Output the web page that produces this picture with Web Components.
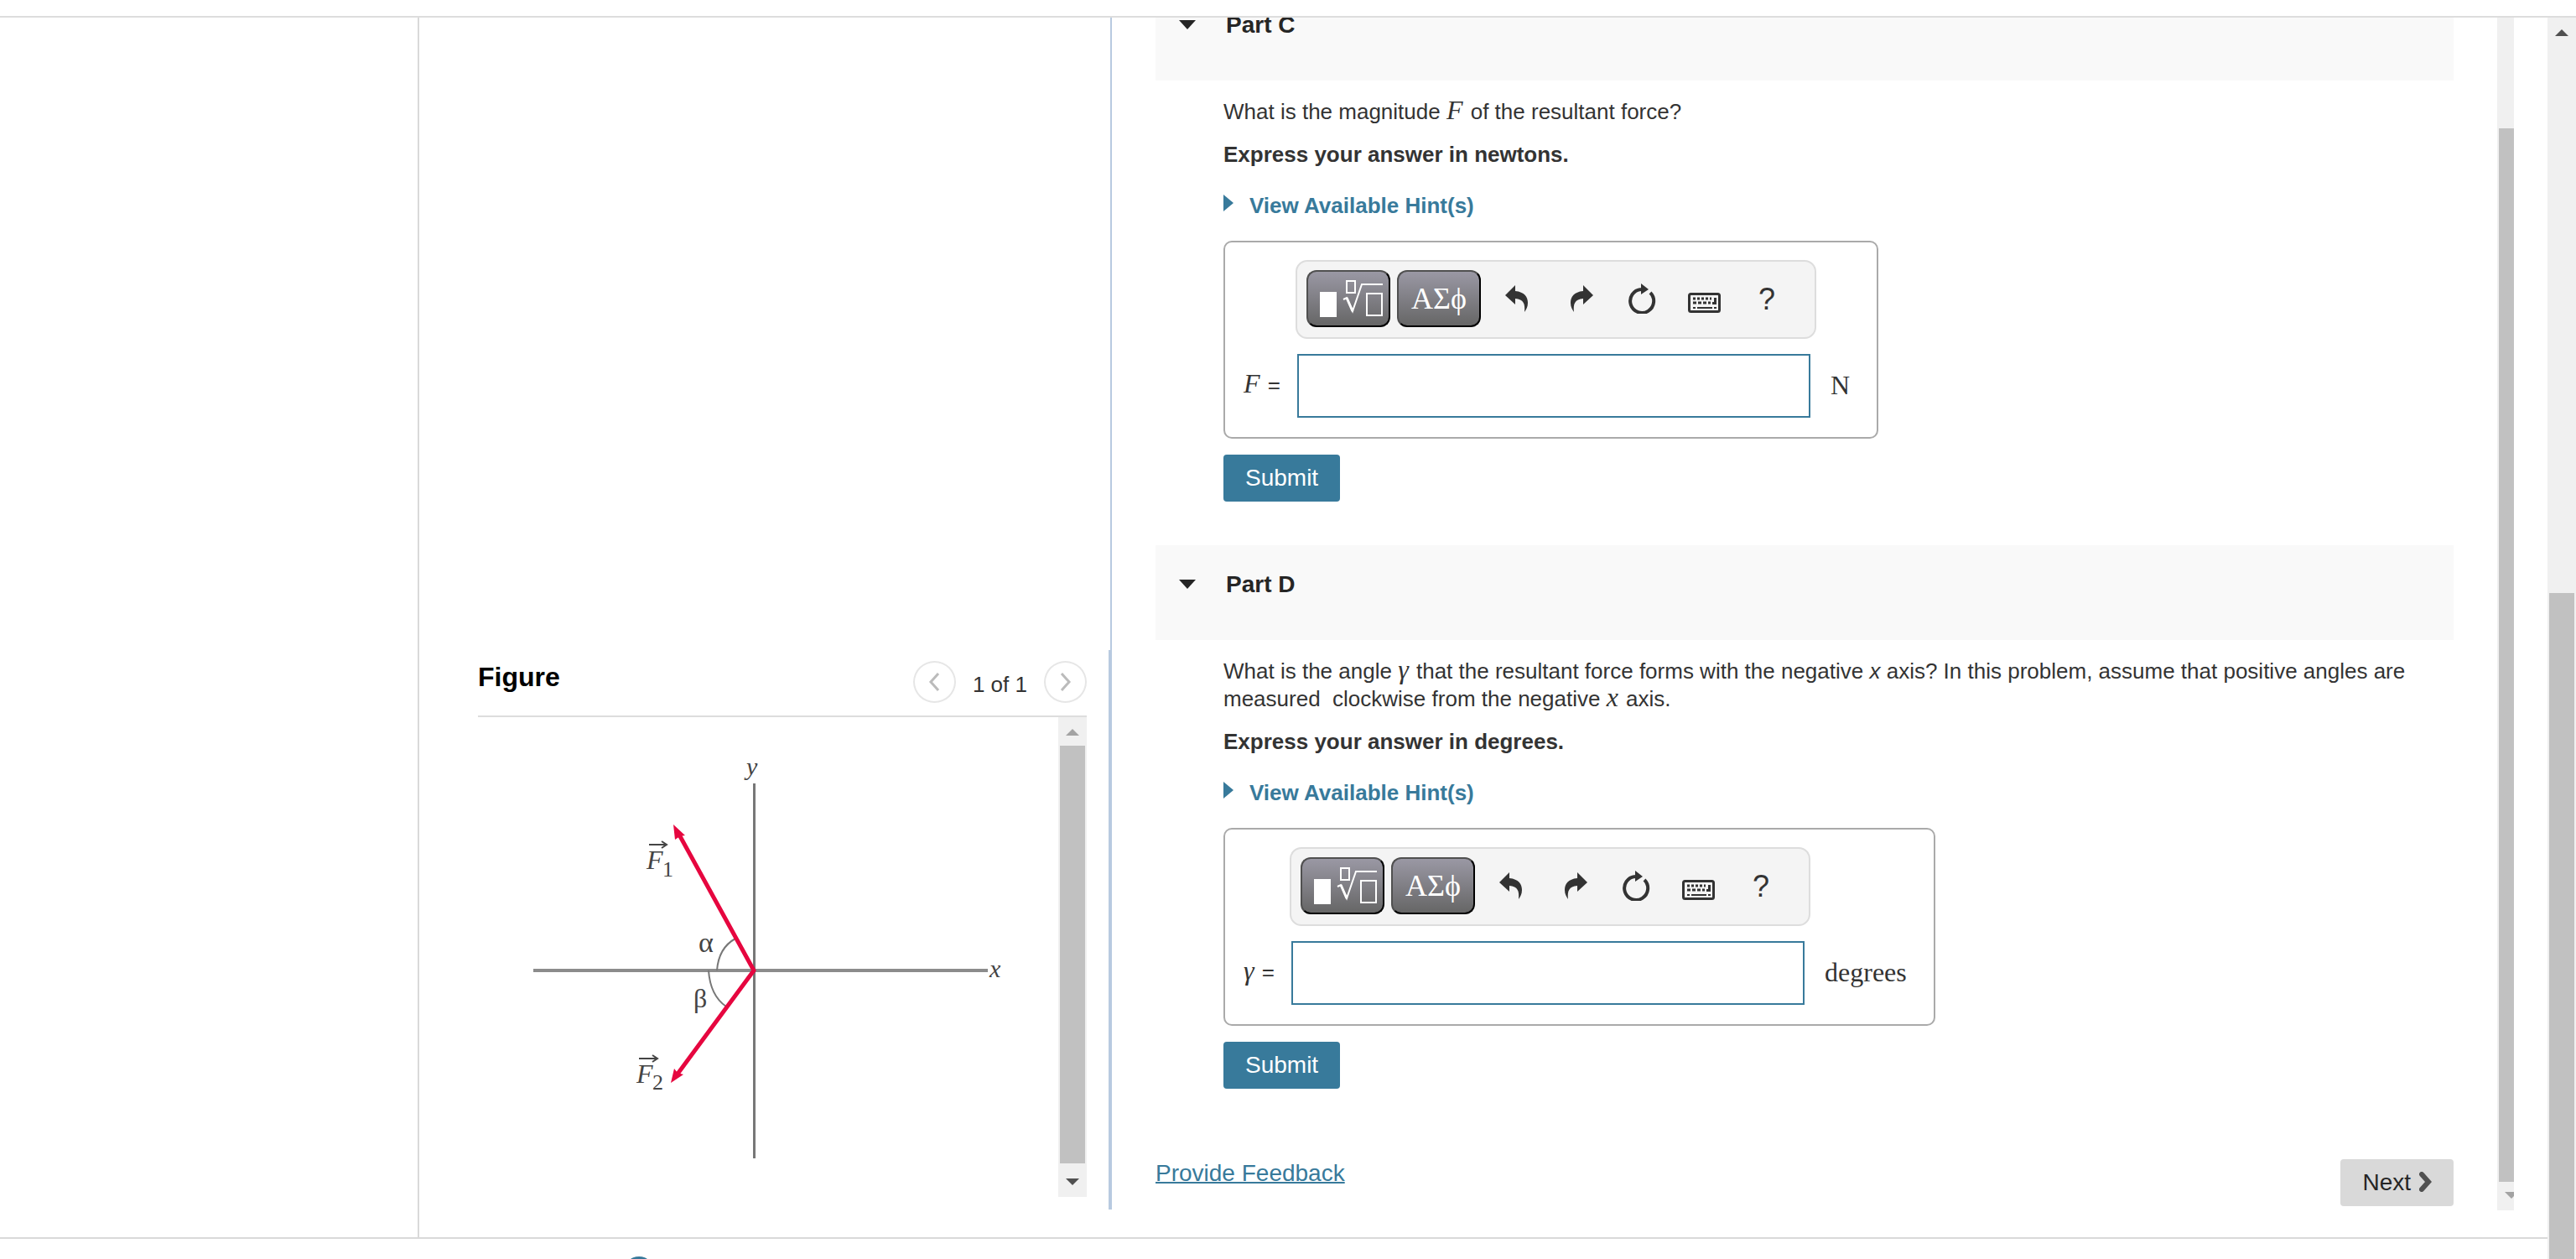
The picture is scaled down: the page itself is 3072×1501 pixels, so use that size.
<!DOCTYPE html>
<html lang="en">
<head>
<meta charset="utf-8">
<title>Resultant force</title>
<style>
    body {
        margin: 0;
        background: #fff;
        color: #333;
        font-family: "Liberation Sans", Arial, sans-serif;
        font-size: 26px;
        line-height: 33px;
    }
    .math {
        margin-right: 2px;
        font-family: "Liberation Serif", "Times New Roman", serif;
        font-size: 32px;
        font-style: italic;
        line-height: 0;
    }
</style>
</head>
<body>
<course-page>
    <figure-panel slot="figure" heading="Figure" position="1 of 1">
        <force-diagram></force-diagram>
    </figure-panel>

    <problem-part heading="Part C">
        <span>What is the magnitude <i class="math">F</i> of the resultant force?</span>
        <span slot="instruction">Express your answer in newtons.</span>
        <answer-box slot="answer" unit="N"><i class="math">F</i> =</answer-box>
    </problem-part>

    <problem-part heading="Part D">
        <span>What is the angle <i class="math">γ</i> that the resultant force forms with the negative <i>x</i> axis? In this problem, assume that positive angles are measured&nbsp; clockwise from the negative <i class="math">x</i> axis.</span>
        <span slot="instruction">Express your answer in degrees.</span>
        <answer-box slot="answer" unit="degrees"><i class="math">γ</i> =</answer-box>
    </problem-part>
</course-page>

<script>
// Static scrollbar: a track, two arrows and a thumb.
// --start and --end are the space between the track ends and the thumb.
class ScrollTrack extends HTMLElement {
    constructor() {
        super();
        this.attachShadow({ mode: 'open' });
    }

    connectedCallback() {
        this.shadowRoot.innerHTML = `
            <style>
                :host {
                    display: flex;
                    flex-direction: column;
                    box-sizing: border-box;
                    flex: none;
                    padding: 0 2px;
                    overflow: hidden;
                    background: #f0f0f0;
                }
                .end {
                    display: flex;
                    flex: none;
                    justify-content: center;
                    box-sizing: border-box;
                }
                .start { height: var(--start, 34px); padding-top: 14px; }
                .stop { height: var(--end, 40px); padding-top: var(--down-gap, 18px); }
                .thumb { flex: 1; background: #c1c1c1; }
                svg { flex: none; width: 16px; height: 8px; }
                .up { fill: var(--up, #a3a3a3); }
                .down { fill: var(--down, #505050); }
            </style>
            <div class="end start"><svg class="up" viewBox="0 0 16 8"><path d="M0 8 8 0l8 8z"/></svg></div>
            <div class="thumb"></div>
            <div class="end stop"><svg class="down" viewBox="0 0 16 8"><path d="M0 0h16L8 8z"/></svg></div>
        `;
    }
}

class CoursePage extends HTMLElement {
    constructor() {
        super();
        this.attachShadow({ mode: 'open' });
        this.shadowRoot.innerHTML = `
            <style>
                :host {
                    display: flex;
                    flex-direction: column;
                    height: 100vh;
                    overflow: hidden;
                }
                header { flex: none; height: 19px; border-bottom: 2px solid #ddd; }
                .window { display: flex; flex: 1; min-height: 0; }
                .content { display: flex; flex-direction: column; flex: 1; min-width: 0; }
                .panes {
                    display: grid;
                    grid-template-columns: 498px 826px minmax(0, 1fr);
                    grid-template-rows: minmax(0, 1fr);
                    flex: 1;
                    min-height: 0;
                    border-bottom: 2px solid #d9d9d9;
                }
                nav { border-right: 2px solid #d9d9d9; width: 498px; }
                .figure { display: flex; padding-left: 2px; padding-bottom: 33px; }
                ::slotted(figure-panel) { flex: 1; }
                .problem { display: flex; padding: 0 40px 32px 54px; min-height: 0; }
                /* scrolled to its end: the last line sits at the bottom */
                main {
                    display: flex;
                    flex-direction: column;
                    justify-content: flex-end;
                    flex: 1;
                    min-width: 0;
                    overflow: hidden;
                    margin-right: 52px;
                }
                .actions {
                    display: flex;
                    flex: none;
                    justify-content: space-between;
                    align-items: flex-start;
                    padding: 32px 0 5px;
                    font-size: 28px;
                    line-height: 34px;
                }
                a { color: #387a9b; text-decoration: underline; text-decoration-thickness: 2px; }
                button {
                    display: flex;
                    align-items: center;
                    gap: 10px;
                    height: 56px;
                    padding: 0 26px;
                    border: 0;
                    border-radius: 4px;
                    background: #d9d9d9;
                    color: #252525;
                    font: inherit;
                }
                button svg { width: 15px; height: 24px; margin-bottom: 3px; }
                footer { flex: none; box-sizing: border-box; height: 24px; padding: 21px 0 0 744px; overflow: hidden; }
                footer svg { display: block; width: 36px; height: 36px; fill: #387a9b; }
                /* the right edge of the inner scrollbar is cut off by its pane */
                .inner-wrap { display: flex; width: 20px; overflow: hidden; }
                .inner { width: 34px; --start: 132px; --end: 34px; --up: transparent; --down: #a3a3a3; --down-gap: 12px; }
                .outer { width: 34px; --start: 686px; --end: 0px; --up: #505050; --down: transparent; --down-gap: 0px; }
            </style>
            <header></header>
            <div class="window">
                <div class="content">
                    <div class="panes">
                        <nav></nav>
                        <div class="figure"><slot name="figure"></slot></div>
                        <div class="problem">
                            <main>
                                <slot></slot>
                                <div class="actions">
                                    <a href="#feedback">Provide Feedback</a>
                                    <button type="button">Next
                                        <svg viewBox="0 0 15 24"><path d="M3 3l8 9-8 9" fill="none" stroke="#505050" stroke-width="6" stroke-linecap="round"/></svg>
                                    </button>
                                </div>
                            </main>
                            <div class="inner-wrap"><scroll-track class="inner"></scroll-track></div>
                        </div>
                    </div>
                    <footer><svg viewBox="0 0 36 36"><circle cx="18" cy="18" r="18"/></svg></footer>
                </div>
                <scroll-track class="outer"></scroll-track>
            </div>
        `;
    }
}

class FigurePanel extends HTMLElement {
    constructor() {
        super();
        this.attachShadow({ mode: 'open' });
    }

    connectedCallback() {
        this.shadowRoot.innerHTML = `
            <style>
                :host { display: flex; flex-direction: column; }
                .spare { flex: 1; border-right: 2px solid #b8cae0; }
                .panel {
                    box-sizing: border-box;
                    height: 667px;
                    padding: 13px 26px 15px 70px;
                    border-right: 4px solid #b8cae0;
                }
                .top {
                    display: flex;
                    align-items: center;
                    justify-content: space-between;
                    height: 50px;
                    padding-bottom: 15px;
                    border-bottom: 2px solid #ddd;
                }
                h2 { margin: 0 0 12px; color: #000; font-size: 32px; line-height: 36px; }
                .pager { display: flex; align-items: center; gap: 20px; }
                .pager span { padding-top: 6px; }
                button {
                    display: flex;
                    align-items: center;
                    justify-content: center;
                    width: 51px;
                    height: 50px;
                    padding: 0;
                    border: 2px solid #e6e6e6;
                    border-radius: 50%;
                    background: #fff;
                }
                button svg { width: 14px; height: 22px; fill: none; stroke: #bbb; stroke-width: 3; }
                .view { display: flex; height: 572px; }
                .canvas { flex: 1; min-width: 0; }
                scroll-track { width: 34px; }
            </style>
            <div class="spare"></div>
            <div class="panel">
                <div class="top">
                    <h2>${this.getAttribute('heading')}</h2>
                    <div class="pager">
                        <button type="button" aria-label="Previous"><svg viewBox="0 0 14 22"><path d="M12 1 3 11l9 10"/></svg></button>
                        <span>${this.getAttribute('position')}</span>
                        <button type="button" aria-label="Next"><svg viewBox="0 0 14 22"><path d="M2 1l9 10-9 10"/></svg></button>
                    </div>
                </div>
                <div class="view">
                    <div class="canvas"><slot></slot></div>
                    <scroll-track></scroll-track>
                </div>
            </div>
        `;
    }
}

// Two force vectors from the origin, with their angles to the negative x axis
class ForceDiagram extends HTMLElement {
    constructor() {
        super();
        this.attachShadow({ mode: 'open' });
        this.shadowRoot.innerHTML = `
            <style>
                :host { display: block; }
                svg { display: block; width: 692px; height: 572px; }
                text { font-family: "Liberation Serif", "Times New Roman", serif; font-size: 32px; fill: #444; }
                .var { font-style: italic; }
                .name { font-size: 30px; }
                .sub { font-size: 26px; }
                .axis { stroke: #777; stroke-width: 3; }
                .arc { fill: none; stroke: #777; stroke-width: 2; }
                .force { stroke: #e6063f; stroke-width: 5; stroke-linecap: round; }
                .head { fill: #e6063f; }
                .over { fill: none; stroke: #444; stroke-width: 2; }
            </style>
            <svg viewBox="570 855 692 572">
                <path class="axis" d="M899.5 934v447"/>
                <path class="axis" d="M636 1157h542" style="stroke:#8c8c8c;stroke-width:4"/>
                <path class="arc" d="M855 1157Q857 1130 877 1119M845 1157Q847 1187 866 1200"/>
                <path class="force" d="M899 1157 811 997M899 1157 809 1279"/>
                <path class="head" d="M803 983l14 13-6 1-6 4zM800 1291l4-17 4 5 7 2z"/>
                <text class="var name" x="890" y="924">y</text>
                <text class="var name" x="1180" y="1165">x</text>
                <text x="833" y="1135" style="font-size:34px">α</text>
                <text x="827" y="1201">β</text>
                <text class="var" x="771" y="1036">F</text>
                <text class="sub" x="790" y="1045">1</text>
                <path class="over" d="M774 1007h21m-6-4 6 4-6 4"/>
                <text class="var" x="759" y="1291">F</text>
                <text class="sub" x="778" y="1299">2</text>
                <path class="over" d="M762 1262h22m-6-4 6 4-6 4"/>
            </svg>
        `;
    }
}

class ProblemPart extends HTMLElement {
    constructor() {
        super();
        this.attachShadow({ mode: 'open' });
    }

    connectedCallback() {
        this.shadowRoot.innerHTML = `
            <style>
                :host { display: block; flex: none; padding-bottom: 52px; }
                .bar {
                    display: flex;
                    align-items: flex-start;
                    gap: 36px;
                    box-sizing: border-box;
                    height: 113px;
                    padding: 31px 28px;
                    background: #f9f9f9;
                }
                .bar svg { width: 20px; height: 11px; padding-top: 10px; fill: #252525; }
                h2 { margin: 0; color: #252525; font-size: 28px; line-height: 32px; }
                .body { padding: 21px 20px 0 81px; }
                p { margin: 0 0 18px; }
                .instruction { margin-bottom: 28px; font-weight: bold; }
                .hint {
                    display: flex;
                    align-items: flex-start;
                    gap: 19px;
                    margin-bottom: 25px;
                    padding: 0;
                    border: 0;
                    background: none;
                    color: #387a9b;
                    font: inherit;
                    font-weight: bold;
                }
                .hint svg { width: 12px; height: 20px; padding-top: 3px; fill: #387a9b; }
                .submit {
                    display: block;
                    height: 56px;
                    margin-top: 19px;
                    padding: 0 26px 2px;
                    border: 0;
                    border-radius: 4px;
                    background: #387a9b;
                    color: #fff;
                    font: inherit;
                    font-size: 28px;
                }
            </style>
            <div class="bar">
                <svg viewBox="0 0 20 11"><path d="M0 0h20L10 11z"/></svg>
                <h2>${this.getAttribute('heading')}</h2>
            </div>
            <div class="body">
                <p><slot></slot></p>
                <p class="instruction"><slot name="instruction"></slot></p>
                <button class="hint" type="button">
                    <svg viewBox="0 0 12 20"><path d="M0 0l12 10L0 20z"/></svg>
                    View Available Hint(s)
                </button>
                <slot name="answer"></slot>
                <button class="submit" type="button">Submit</button>
            </div>
        `;
    }
}

class MathToolbar extends HTMLElement {
    constructor() {
        super();
        this.attachShadow({ mode: 'open' });
        this.shadowRoot.innerHTML = `
            <style>
                :host {
                    display: flex;
                    box-sizing: border-box;
                    gap: 8px;
                    width: 621px;
                    height: 94px;
                    padding: 10px 11px;
                    border: 2px solid #ddd;
                    border-radius: 14px;
                    background: #f4f4f4;
                }
                button { padding: 0; border: 0; background: none; color: #333; font: inherit; }
                .menu {
                    flex: none;
                    width: 100px;
                    height: 68px;
                    border: 2px solid;
                    border-color: #505050 #000 #000 #505050;
                    border-radius: 12px;
                    background: linear-gradient(#9a98a4, #666);
                    color: #fff;
                }
                .menu svg { display: block; width: 96px; height: 64px; fill: none; stroke: #fff; stroke-width: 2; }
                .greek { font-family: "Liberation Serif", "Times New Roman", serif; font-size: 36px; }
                .tools { display: flex; }
                .tools button { display: flex; align-items: center; justify-content: center; width: 74px; height: 68px; }
                .tools svg { width: 40px; height: 36px; fill: #333; }
                .tools .help { font-size: 36px; }
            </style>
            <button class="menu" type="button" aria-label="Templates">
                <svg viewBox="2 2 96 64">
                    <path d="M17 27h18v28H17z" fill="#fff"/>
                    <path d="M48 13h10v14H48zM72 28h18v26H72zM44 35l4-2 7 16 11-32h25"/>
                    <path d="M48 33l7 16" stroke-width="3"/>
                </svg>
            </button>
            <button class="menu greek" type="button" aria-label="Symbols">ΑΣϕ</button>
            <div class="tools">
                <button type="button" aria-label="Undo"><svg viewBox="0 0 40 36"><path d="M4 14 16 2v7c11 1 15 7 15 14 0 5-2 8-4 11 1-10-1-15-11-16v7z"/></svg></button>
                <button type="button" aria-label="Redo"><svg viewBox="0 0 40 36"><path d="M35 14 23 2v7C12 10 8 16 8 23c0 5 2 8 4 11-1-10 1-15 11-16v7z"/></svg></button>
                <button type="button" aria-label="Reset"><svg viewBox="0 0 40 36"><path d="M18 7a14 14 0 1 0 11 4" fill="none" stroke="#333" stroke-width="4"/><path d="M18 0l9 7-9 6z"/></svg></button>
                <button type="button" aria-label="Keyboard">
                    <svg viewBox="0 0 40 36">
                        <rect x="1.5" y="12.5" width="36" height="21" rx="2" fill="none" stroke="#333" stroke-width="3"/>
                        <path d="M6 18h22" fill="none" stroke="#333" stroke-width="3" stroke-dasharray="3 2"/>
                        <path d="M6 23h21" fill="none" stroke="#333" stroke-width="3" stroke-dasharray="4 2"/>
                        <path d="M31 17h3v8h-5v-3h2zM6 28h3v2H6zM11 28h18v2H11zM31 28h3v2h-3z"/>
                    </svg>
                </button>
                <button class="help" type="button">?</button>
            </div>
        `;
    }
}

class AnswerBox extends HTMLElement {
    constructor() {
        super();
        this.attachShadow({ mode: 'open' });
    }

    connectedCallback() {
        this.shadowRoot.innerHTML = `
            <style>
                :host {
                    display: grid;
                    grid-template-columns: auto auto auto;
                    align-items: end;
                    box-sizing: border-box;
                    width: max-content;
                    height: 236px;
                    padding: 21px 32px 23px 22px;
                    border: 2px solid #aaa;
                    border-radius: 10px;
                }
                math-toolbar { grid-column: 2 / span 2; align-self: start; }
                label { padding-right: 18px; }
                input {
                    box-sizing: border-box;
                    width: 612px;
                    height: 76px;
                    margin: 0 0 0 2px;
                    border: 2px solid #387a9b;
                    background: #fff;
                    font: inherit;
                }
                .unit {
                    padding-left: 24px;
                    font-family: "Liberation Serif", "Times New Roman", serif;
                    font-size: 32px;
                }
                label, .unit { padding-bottom: 22px; }
            </style>
            <math-toolbar></math-toolbar>
            <label for="answer"><slot></slot></label>
            <input id="answer" type="text">
            <span class="unit">${this.getAttribute('unit')}</span>
        `;
    }
}

customElements.define('scroll-track', ScrollTrack);
customElements.define('force-diagram', ForceDiagram);
customElements.define('math-toolbar', MathToolbar);
customElements.define('answer-box', AnswerBox);
customElements.define('figure-panel', FigurePanel);
customElements.define('problem-part', ProblemPart);
customElements.define('course-page', CoursePage);
</script>
</body>
</html>
